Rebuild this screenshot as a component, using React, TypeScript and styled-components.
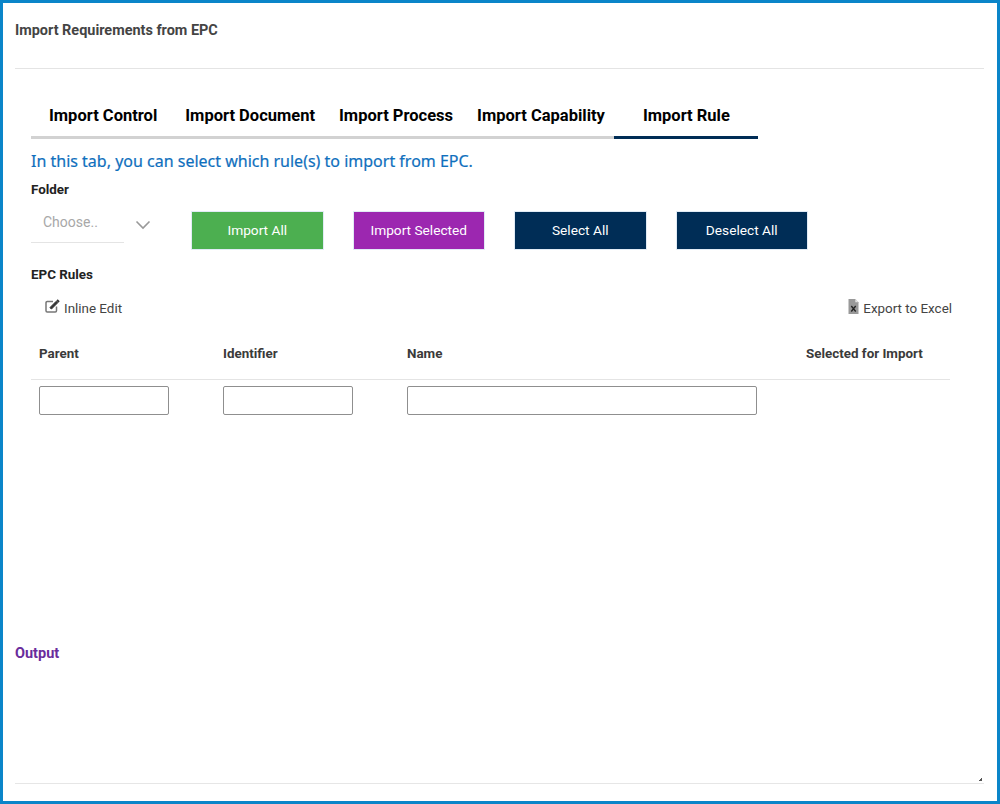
import React from "react";
import styled, { createGlobalStyle } from "styled-components";

const GlobalStyle = createGlobalStyle`
  html, body {
    margin: 0;
    padding: 0;
    background: #fff;
  }
  * {
    box-sizing: border-box;
  }
`;

const Frame = styled.div`
  position: relative;
  width: 1000px;
  height: 804px;
  border: 3px solid #0b85c9;
  background: #fff;
  font-family: Roboto, "Liberation Sans", sans-serif;
  display: flex;
  flex-direction: column;
  padding: 0 12px;
`;

const Title = styled.h1`
  margin: 0;
  height: 66px;
  padding-top: 19px;
  font-size: 14.45px;
  line-height: 17px;
  font-weight: 700;
  color: #444;
  border-bottom: 1px solid #e4e4e4;
  width: 969px;
`;

const Content = styled.div`
  padding: 0 0 0 16px;
  flex: 1;
  display: flex;
  flex-direction: column;
`;

const TabBar = styled.div`
  display: flex;
  margin-top: 31px;
`;

const Tab = styled.div<{ $left: number; $right: number; $active?: boolean }>`
  height: 39px;
  padding: 6px ${(p) => p.$right}px 0 ${(p) => p.$left}px;
  font-size: 16.5px;
  line-height: 20px;
  font-weight: 700;
  color: #000;
  white-space: nowrap;
  border-bottom: 3px solid ${(p) => (p.$active ? "#002d56" : "#d2d2d2")};
`;

const Intro = styled.p`
  margin: 11px 0 0;
  font-family: "Noto Sans", "Open Sans", sans-serif;
  font-size: 16px;
  line-height: 22px;
  color: #0f6fbd;
  -webkit-text-stroke: 0.2px #0f6fbd;
`;

const FieldLabel = styled.div`
  margin-top: 10px;
  font-size: 13.4px;
  line-height: 16px;
  font-weight: 700;
  color: #222;
`;

const Toolbar = styled.div`
  display: flex;
  margin-top: 14px;
`;

const Select = styled.div`
  width: 161px;
  height: 37px;
  display: flex;
  align-items: flex-start;
`;

const SelectValue = styled.div`
  width: 93px;
  height: 31px;
  padding: 2px 0 0 12px;
  font-size: 14px;
  line-height: 17px;
  color: #a8a8a8;
  border-bottom: 1px solid #e4e4e4;
`;

const Chevron = styled.svg`
  width: 16px;
  height: 10px;
  margin: 8px 0 0 11px;
`;

const ActionButton = styled.button<{ $bg: string }>`
  width: 130.5px;
  height: 37px;
  margin-right: 31px;
  padding: 0 0 2px;
  border: none;
  box-shadow: 0 0 0 1px rgba(205, 222, 238, 0.6);
  background: ${(p) => p.$bg};
  color: #fff;
  font-family: inherit;
  font-size: 13.7px;
`;

const SectionLabel = styled(FieldLabel)`
  margin-top: 18px;
`;

const GridActions = styled.div`
  display: flex;
  justify-content: space-between;
  margin-top: 16px;
  width: 921px;
  height: 18px;
  padding-left: 14px;
`;

const GridAction = styled.div`
  display: flex;
  align-items: center;
  gap: 4px;
  font-size: 13.4px;
  line-height: 17px;
  color: #444;
`;

const EditIcon = styled.svg`
  width: 15px;
  height: 14px;
  margin-top: -5px;
`;

const ExcelIcon = styled.svg`
  width: 11px;
  height: 15px;
  margin-top: -4px;
`;

const Table = styled.div`
  width: 919px;
  margin-top: 21px;
`;

const HeaderRow = styled.div`
  display: grid;
  grid-template-columns: 184px 184px 399px 1fr;
  height: 42px;
  padding: 8px 0 0 8px;
  border-bottom: 1px solid #e4e4e4;
  font-size: 13.4px;
  line-height: 16px;
  font-weight: 700;
  color: #3a3a3a;
`;

const FilterRow = styled.div`
  display: grid;
  grid-template-columns: 184px 184px 399px 1fr;
  padding: 6px 0 0 8px;
`;

const FilterInput = styled.input<{ $width: number }>`
  width: ${(p) => p.$width}px;
  height: 29px;
  padding: 0 6px;
  border: 1px solid #8f8f8f;
  border-radius: 2px;
  background: #fff;
  outline: none;
`;

const OutputLabel = styled.div`
  margin: 230px 0 0 -16px;
  font-size: 14.5px;
  line-height: 17px;
  font-weight: 700;
  color: #6a2c9c;
`;

const Footer = styled.div`
  margin: auto 0 17px -16px;
  width: 969px;
  border-bottom: 1px solid #e6e6e6;
`;

const ResizeHandle = styled.span`
  position: absolute;
  right: 15px;
  bottom: 20px;
  width: 3px;
  height: 3px;
  background: linear-gradient(135deg, transparent 40%, #555 40%);
`;

export default function App() {
  return (
    <>
      <GlobalStyle />
      <Frame>
        <Title>Import Requirements from EPC</Title>
        <Content>
          <TabBar>
            <Tab $left={18} $right={14}>Import Control</Tab>
            <Tab $left={14} $right={12}>Import Document</Tab>
            <Tab $left={12} $right={12}>Import Process</Tab>
            <Tab $left={12} $right={9}>Import Capability</Tab>
            <Tab $left={29} $right={28.5} $active>Import Rule</Tab>
          </TabBar>
          <Intro>In this tab, you can select which rule(s) to import from EPC.</Intro>
          <FieldLabel>Folder</FieldLabel>
          <Toolbar>
            <Select>
              <SelectValue>Choose..</SelectValue>
              <Chevron viewBox="0 0 16 10" fill="none" stroke="#999" strokeWidth="1.6">
                <path d="M1.5 1.5 8 8l6.5-6.5" />
              </Chevron>
            </Select>
            <ActionButton $bg="#4caf50">Import All</ActionButton>
            <ActionButton $bg="#9c27b0">Import Selected</ActionButton>
            <ActionButton $bg="#002d56">Select All</ActionButton>
            <ActionButton $bg="#002d56">Deselect All</ActionButton>
          </Toolbar>
          <SectionLabel>EPC Rules</SectionLabel>
          <GridActions>
            <GridAction>
              <EditIcon viewBox="0 0 15 14" fill="none">
                <path d="M8 2.5H2.2A1.2 1.2 0 0 0 1 3.7v8.1A1.2 1.2 0 0 0 2.2 13h8.1a1.2 1.2 0 0 0 1.2-1.2V7.5" stroke="#777" strokeWidth="1.5" />
                <path d="M5.5 9.5 5 8.4 11.2 2.2l1.6 1.6L6.6 10z" fill="#333" stroke="#333" strokeWidth="0.8" />
                <path d="M12 1l2 2" stroke="#333" strokeWidth="2" />
              </EditIcon>
              Inline Edit
            </GridAction>
            <GridAction>
              <ExcelIcon viewBox="0 0 11 15">
                <path d="M0.5 0h6.8L10.5 3.2V15H0.5z" fill="#999" />
                <path d="M7.3 0v3.2h3.2z" fill="#e4e4e4" />
                <path d="M3.3 7l4.4 5.5M7.7 7l-4.4 5.5" stroke="#222" strokeWidth="1.3" />
              </ExcelIcon>
              Export to Excel
            </GridAction>
          </GridActions>
          <Table>
            <HeaderRow>
              <span>Parent</span>
              <span>Identifier</span>
              <span>Name</span>
              <span>Selected for Import</span>
            </HeaderRow>
            <FilterRow>
              <FilterInput $width={130} />
              <FilterInput $width={130} />
              <FilterInput $width={350} />
            </FilterRow>
          </Table>
          <OutputLabel>Output</OutputLabel>
          <Footer />
        </Content>
        <ResizeHandle />
      </Frame>
    </>
  );
}
